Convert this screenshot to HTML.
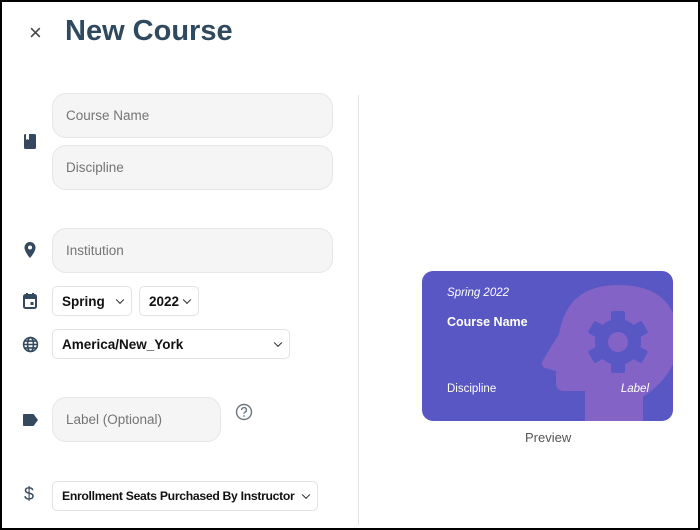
<!DOCTYPE html>
<html><head><style>
*{box-sizing:border-box;margin:0;padding:0}
body{width:700px;height:530px;background:#fff;font-family:"Liberation Sans",sans-serif;position:relative;overflow:hidden}
.frame{position:absolute;inset:0;border:2px solid #000}
.a{position:absolute}
.inp{position:absolute;left:52px;background:#f5f5f5;border:1px solid #e6e6e6;border-radius:14px;color:#757575;font-size:13.5px;padding-left:13px;display:flex;align-items:center}
.sel{position:absolute;background:#fff;border:1px solid #e3e3e3;border-radius:5px;font-weight:bold;font-size:13.5px;color:#111;padding-left:9px;display:flex;align-items:center;white-space:nowrap}
.sel .c{position:absolute;right:8px;top:50%;width:6px;height:6px;border-right:1.6px solid #222;border-bottom:1.6px solid #222;transform:translateY(-70%) rotate(45deg)}
.ic{position:absolute;left:22px}
</style></head><body>
<div class="frame"></div>
<div class="a" style="left:29px;top:20px;font-size:22px;color:#444;font-weight:300">×</div>
<div class="a" style="left:65px;top:15px;font-size:29px;font-weight:bold;color:#2f4a5f">New Course</div>
<div class="a" style="left:358px;top:95px;width:1px;height:430px;background:#e2e2e2"></div>

<div class="inp" style="top:93px;width:281px;height:45px">Course Name</div>
<div class="inp" style="top:145px;width:281px;height:45px">Discipline</div>
<div class="inp" style="top:228px;width:281px;height:45px">Institution</div>
<div class="inp" style="top:397px;width:169px;height:45px">Label (Optional)</div>

<svg class="ic" style="top:133px" width="16" height="18" viewBox="0 0 16 18"><rect x="2" y="1" width="12" height="15" rx="1.5" fill="#34495e"/><path d="M4 1h3v6l-1.5-1L4 7z" fill="#fff"/></svg>
<svg class="ic" style="top:241px" width="16" height="18" viewBox="0 0 16 18"><path d="M8 1a5.5 5.5 0 0 0-5.5 5.5C2.5 11 8 17 8 17s5.5-6 5.5-10.5A5.5 5.5 0 0 0 8 1z" fill="#34495e"/><circle cx="8" cy="6.5" r="2" fill="#fff"/></svg>
<svg class="ic" style="top:292px" width="16" height="18" viewBox="0 0 16 18"><rect x="2" y="3" width="12" height="13" rx="1.5" fill="none" stroke="#34495e" stroke-width="2"/><rect x="2" y="3" width="12" height="4" fill="#34495e"/><rect x="4" y="1" width="2" height="3" fill="#34495e"/><rect x="10" y="1" width="2" height="3" fill="#34495e"/><rect x="8.5" y="10" width="3" height="3" fill="#34495e"/></svg>
<svg class="ic" style="top:336px" width="17" height="17" viewBox="0 0 16 16"><g fill="none" stroke="#34495e" stroke-width="1.5"><circle cx="8" cy="8" r="6.5"/><ellipse cx="8" cy="8" rx="2.8" ry="6.5"/><path d="M1.5 8h13M2.5 4.8h11M2.5 11.2h11"/></g></svg>
<svg class="ic" style="top:413px" width="17" height="14" viewBox="0 0 17 14"><path d="M1 2a1 1 0 0 1 1-1h9.5l4.5 6-4.5 6H2a1 1 0 0 1-1-1z" fill="#34495e"/></svg>
<div class="a" style="left:24px;top:484px;font-size:18px;color:#34495e">$</div>

<div class="sel" style="left:52px;top:286px;width:80px;height:30px">Spring<span class="c"></span></div>
<div class="sel" style="left:139px;top:286px;width:60px;height:30px">2022<span class="c"></span></div>
<div class="sel" style="left:52px;top:329px;width:238px;height:30px">America/New_York<span class="c"></span></div>
<div class="sel" style="left:52px;top:481px;width:266px;height:30px;font-size:12.2px;letter-spacing:-0.3px">Enrollment Seats Purchased By Instructor<span class="c"></span></div>

<svg class="a" style="left:235px;top:403px" width="18" height="18" viewBox="0 0 18 18"><circle cx="9" cy="9" r="7.5" fill="none" stroke="#6b7780" stroke-width="1.4"/><path d="M6.6 7a2.4 2.4 0 1 1 3.4 2.2c-.7.4-1 .8-1 1.6" fill="none" stroke="#6b7780" stroke-width="1.4"/><circle cx="9" cy="13" r=".9" fill="#6b7780"/></svg>

<svg class="a" style="left:422px;top:271px" width="251" height="150" viewBox="0 0 251 150">
<defs><clipPath id="cp"><rect width="251" height="150" rx="11"/></clipPath></defs>
<g clip-path="url(#cp)">
<rect width="251" height="150" fill="#5857c4"/>
<path d="M163,150 L163,120 L142,120 Q134,120 134,112 L134,100 L123,97 Q118,94 121,89 L137,63 Q145,14 196,14 Q256,14 256,70 Q256,102 221,126 L221,150 Z" fill="#8364c6"/>
<g transform="translate(196,71)" fill="#5857c4">
<circle r="23"/>
<g id="t"><rect x="-7" y="-31" width="14" height="13" rx="2"/></g>
<use href="#t" transform="rotate(60)"/><use href="#t" transform="rotate(120)"/><use href="#t" transform="rotate(180)"/><use href="#t" transform="rotate(240)"/><use href="#t" transform="rotate(300)"/>
<circle r="10" fill="#8364c6"/>
</g>
</g>
<text x="25" y="25" font-family="Liberation Sans" font-size="11.5" font-style="italic" fill="#fff">Spring 2022</text>
<text x="25" y="55" font-family="Liberation Sans" font-size="12.5" font-weight="bold" fill="#fff">Course Name</text>
<text x="25" y="121" font-family="Liberation Sans" font-size="11.5" fill="#fff">Discipline</text>
<text x="227" y="121" font-family="Liberation Sans" font-size="11.5" font-style="italic" fill="#fff" text-anchor="end">Label</text>
</svg>
<div class="a" style="left:525px;top:430px;font-size:13px;color:#555">Preview</div>
</body></html>
